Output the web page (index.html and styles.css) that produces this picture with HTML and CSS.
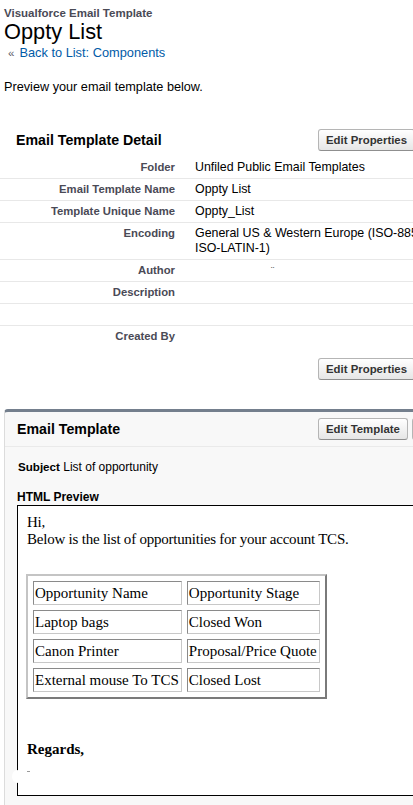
FILE: index.html
```html
<!DOCTYPE html>
<html>
<head>
<meta charset="utf-8">
<title>Oppty List</title>
<link rel="stylesheet" href="styles.css">
</head>
<body>
<div class="page">
  <div class="page-head">
    <div class="page-type">Visualforce Email Template</div>
    <h1 class="page-title">Oppty List</h1>
    <div class="breadcrumb"><span class="raquo">«</span><a href="#">Back to List: Components</a></div>
  </div>
  <p class="intro">Preview your email template below.</p>

  <section class="detail">
    <div class="block-head">
      <h2 class="block-title">Email Template Detail</h2>
      <div class="btns"><button class="btn">Edit Properties</button></div>
    </div>
    <div class="detail-list">
      <div class="row"><div class="label">Folder</div><div class="value">Unfiled Public Email Templates</div></div>
      <div class="row"><div class="label">Email Template Name</div><div class="value">Oppty List</div></div>
      <div class="row"><div class="label">Template Unique Name</div><div class="value">Oppty_List</div></div>
      <div class="row"><div class="label">Encoding</div><div class="value">General US &amp; Western Europe (ISO-8859-1, ISO-LATIN-1)</div></div>
      <div class="row"><div class="label">Author</div><div class="value"><span class="mark">¨</span></div></div>
      <div class="row"><div class="label">Description</div><div class="value"></div></div>
      <div class="row"><div class="label"></div><div class="value"></div></div>
      <div class="row"><div class="label">Created By</div><div class="value"></div></div>
    </div>
    <div class="detail-foot"><button class="btn">Edit Properties</button></div>
  </section>

  <section class="panel">
    <div class="panel-head">
      <h2 class="block-title">Email Template</h2>
      <div class="btns"><button class="btn">Edit Template</button><button class="btn">Send Test and Verify Merge Fields</button></div>
    </div>
    <div class="panel-body">
      <div class="subject"><b>Subject</b> List of opportunity</div>
      <div class="preview-label">HTML Preview</div>
      <div class="preview">
        <p class="greet">Hi,<br>Below is the list of opportunities for your account TCS.</p>
        <table class="opp">
          <tr><td>Opportunity Name</td><td>Opportunity Stage</td></tr>
          <tr><td>Laptop bags</td><td>Closed Won</td></tr>
          <tr><td>Canon Printer</td><td>Proposal/Price Quote</td></tr>
          <tr><td>External mouse To TCS</td><td>Closed Lost</td></tr>
        </table>
        <p class="regards">Regards,</p>
        <div class="sig"></div>
        <span class="blot"></span>
      </div>
    </div>
  </section>
</div>
</body>
</html>
```

FILE: styles.css
```css
* { box-sizing: border-box; }
html, body { margin: 0; padding: 0; overflow: hidden; background: #fff; }
body { font-family: "Liberation Sans", Arial, sans-serif; color: #000; }

.page { width: 600px; }

.page-head { padding: 6px 0 0 4px; }
.page-type { font-size: 11.5px; font-weight: bold; line-height: 14px; color: #4a4a56; }
.page-title { margin: 0; font-size: 21.8px; font-weight: normal; line-height: 24px; color: #000; }
.breadcrumb { margin-top: 1px; padding-left: 4px; font-size: 12.8px; line-height: 16px; }
.raquo { color: #5a5a66; font-size: 11.5px; margin-right: 5px; }
.breadcrumb a { color: #015ba7; text-decoration: none; }

.intro { margin: 18px 0 0; padding-left: 4px; font-size: 12.7px; line-height: 16px; color: #000; }

.detail { margin-top: 34px; width: 480px; }
.block-head { display: grid; grid-template-columns: 318px auto; align-items: center; }
.block-title { margin: 0; padding-left: 16px; font-size: 14.2px; font-weight: bold; line-height: 22px; color: #000; }
.btns { display: flex; gap: 4px; white-space: nowrap; }

.btn {
  font-family: "Liberation Sans", Arial, sans-serif;
  font-size: 11.4px; font-weight: bold; line-height: 14px; color: #333;
  padding: 3px 7px; margin: 0;
  border: 1px solid #b5b5b5; border-bottom-color: #8f8f8f;
  border-radius: 3px;
  background: linear-gradient(#ffffff, #f0f0f0 60%, #e6e6e6);
  white-space: nowrap;
}

.detail-list { margin-top: 6px; }
.row { display: grid; grid-template-columns: 185px 295px; border-bottom: 1px solid #e8e8e8; }
.row:last-child { border-bottom: 0; }
.label { padding: 3px 10px 3px 2px; text-align: right; font-size: 11.3px; font-weight: bold; line-height: 15px; color: #4a4a56; }
.value { padding: 3px 27px 3px 10px; font-size: 12.4px; line-height: 15px; color: #000; min-height: 21px; }
.mark { display: inline-block; vertical-align: top; margin: 4px 0 0 76px; color: #555; font-size: 10px; line-height: 10px; }

.detail-foot { margin-top: 11px; padding-left: 318px; }

.panel {
  margin: 29px 0 0 4px; width: 560px; min-height: 420px;
  background: #f8f8f8;
  border-top: 3px solid #747f8d; border-left: 1px solid #dcdcdc;
  border-radius: 4px 4px 0 0;
}
.panel-head {
  display: grid; grid-template-columns: 313px auto; align-items: center;
  padding: 6px 0; border-bottom: 1px solid #eaeaea;
}
.panel-head .block-title { padding-left: 12px; }

.panel-body { padding-top: 12px; }
.subject { padding-left: 13px; font-size: 12px; line-height: 15px; }
.subject b { font-size: 11.6px; }
.preview-label { margin-top: 15px; padding-left: 12px; font-size: 12px; font-weight: bold; line-height: 15px; }

.preview {
  position: relative;
  margin-left: 12px; width: 540px; min-height: 291px;
  background: #fff; border: 1px solid #000;
  padding: 8px 9px;
  font-family: "Liberation Serif", "Times New Roman", serif; font-size: 15px; color: #000;
}
.greet { margin: 0; line-height: 17px; letter-spacing: -0.22px; }
.opp {
  margin: 26px 0 0 -1px;
  border-collapse: separate; border-spacing: 5px;
  border: 2px solid; border-color: #c4c4c4 #7a7a7a #7a7a7a #c4c4c4;
  font-size: 15px;
}
.opp td {
  border: 1px solid; border-color: #8a8a8a #c8c8c8 #c8c8c8 #8a8a8a;
  padding: 2px 2px 2px 1px; line-height: 18px; white-space: nowrap;
}
.regards { margin: 42px 0 0; font-weight: bold; line-height: 17px; }
.sig { margin-top: 13px; width: 3px; height: 1px; background: #9a9a9a; }
.blot { position: absolute; left: -6px; top: 264px; width: 10px; height: 13px; border-radius: 50%; background: #fff; }
```
